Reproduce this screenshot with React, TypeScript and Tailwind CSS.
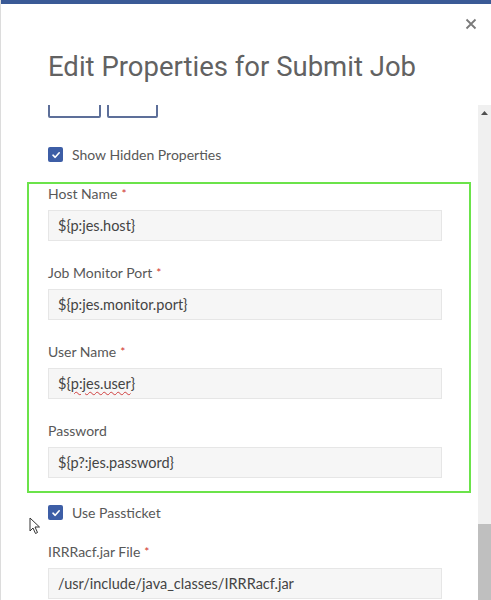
import { ReactNode } from "react";

const Check = () => (
  <div className="w-[15px] h-[15px] bg-[#3d5ea6] rounded-[2px] flex items-center justify-center shrink-0">
    <svg width="10" height="10" viewBox="0 0 10 10" fill="none">
      <path d="M2 5.2 L4.2 7.3 L8.2 2.8" stroke="white" strokeWidth="1.6" strokeLinecap="round" strokeLinejoin="round" />
    </svg>
  </div>
);

const Field = ({ label, required, children, className = "" }: { label: string; required?: boolean; children: ReactNode; className?: string }) => (
  <div className={className}>
    <div className="h-[20px] leading-[20px] text-[14px] text-[#585858] mb-[6px]">
      {label}
      {required && <span className="text-[#d0342c] text-[12px] ml-[4px] align-top">*</span>}
    </div>
    <div className="h-[31px] bg-[#f6f6f6] border border-[#e6e6e6] flex items-center px-[9px] text-[14.5px] text-[#444]">
      {children}
    </div>
  </div>
);

export default function App() {
  return (
    <div className="relative w-[491px] h-[600px] bg-white flex flex-col overflow-hidden border-l border-[#dcdcdc]" style={{ fontFamily: "Lato, 'Open Sans', sans-serif" }}>
      <div className="h-[4px] bg-[#3a5a96] shrink-0" />

      {/* header */}
      <div className="relative h-[101px] shrink-0">
        <button className="absolute right-[14px] top-[14px] text-[#7a7a7a]">
          <svg width="12" height="12" viewBox="0 0 12 12">
            <path d="M1.5 1.5 L10.5 10.5 M10.5 1.5 L1.5 10.5" stroke="currentColor" strokeWidth="1.8" />
          </svg>
        </button>
        <h1 className="pl-[47px] pt-[46px] text-[27.5px] leading-[34px] text-[#626262]" style={{ fontFamily: "Roboto, 'Noto Sans', sans-serif" }}>
          Edit Properties for Submit Job
        </h1>
      </div>

      {/* body */}
      <div className="flex-1 flex overflow-hidden">
        <div className="flex-1 overflow-hidden">
          <div className="flex gap-[6px] pl-[47px] mt-[-17px]">
            <div className="w-[53px] h-[30px] border-2 border-[#5d6f99] rounded-[2px]" />
            <div className="w-[51px] h-[30px] border-2 border-[#5d6f99] rounded-[2px]" />
          </div>

          <div className="flex items-center gap-[9px] pl-[47px] mt-[29px] h-[15px]">
            <Check />
            <span className="text-[14px] text-[#585858]">Show Hidden Properties</span>
          </div>

          <div className="ml-[26px] mr-[7px] mt-[20px] border-2 border-[#6be34a] pl-[19px] pr-[27px] pb-[13px]">
            <Field label="Host Name" required>${"{p:jes.host}"}</Field>
            <Field label="Job Monitor Port" required className="mt-[22px]">${"{p:jes.monitor.port}"}</Field>
            <Field label="User Name" required className="mt-[22px]">
              ${"{"}<span className="underline decoration-wavy decoration-[#d04040] decoration-1 underline-offset-2">p:jes.user</span>{"}"}
            </Field>
            <Field label="Password" className="mt-[22px]">${"{p?:jes.password}"}</Field>
          </div>

          <div className="flex items-center gap-[9px] pl-[47px] mt-[12px] h-[15px]">
            <Check />
            <span className="text-[14px] text-[#585858]">Use Passticket</span>
          </div>

          <div className="pl-[47px] pr-[36px] mt-[22px]">
            <Field label="IRRRacf.jar File" required>/usr/include/java_classes/IRRRacf.jar</Field>
          </div>
        </div>

        {/* scrollbar */}
        <div className="w-[13px] bg-[#f0f0f0] flex flex-col shrink-0">
          <div className="h-[16px] flex items-center justify-center">
            <svg width="7" height="4" viewBox="0 0 7 4"><path d="M0 4 L3.5 0 L7 4 Z" fill="#505050" /></svg>
          </div>
          <div className="flex-1" />
          <div className="h-[76px] bg-[#bfbfbf]" />
        </div>
      </div>

      {/* mouse cursor */}
      <svg className="absolute left-[28px] top-[517px]" width="13" height="18" viewBox="0 0 13 18">
        <path d="M1 1 L1 14 L4 11 L6.5 16.5 L8.5 15.5 L6 10 L10.5 10 Z" fill="white" stroke="#333" strokeWidth="1" strokeLinejoin="round" />
      </svg>
    </div>
  );
}
